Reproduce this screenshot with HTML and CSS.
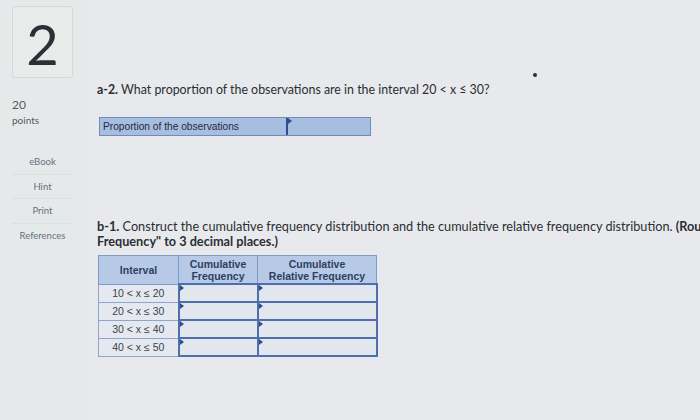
FILE: index.html
```html
<!DOCTYPE html>
<html>
<head>
<meta charset="utf-8">
<link rel="stylesheet" href="styles.css">
</head>
<body>
<div class="page">
  <aside class="side">
    <div class="qnum">2</div>
    <div class="pts"><div class="pts-n">20</div><div class="pts-l">points</div></div>
    <nav class="tools">
      <div class="tool">eBook</div>
      <div class="tool">Hint</div>
      <div class="tool">Print</div>
      <div class="tool">References</div>
    </nav>
  </aside>
  <main class="main">
    <p class="q"><b class="lbl">a-2.</b> What proportion of the observations are in the interval 20 &lt; x ≤ 30?</p>
    <div class="prop">
      <div class="prop-l">Proportion of the observations</div>
      <div class="prop-i"><span class="mark"></span></div>
    </div>
    <p class="q2"><b class="lbl">b-1.</b> Construct the cumulative frequency distribution and the cumulative relative frequency distribution. <b>(Round "Cumulative Relative</b><br><b>Frequency" to 3 decimal places.)</b></p>
    <table class="tbl">
      <thead>
        <tr><th class="c1">Interval</th><th class="c2">Cumulative<br>Frequency</th><th class="c3">Cumulative<br>Relative Frequency</th></tr>
      </thead>
      <tbody>
        <tr><td class="iv">10 &lt; x ≤ 20</td><td class="in"><span class="mark"></span></td><td class="in"><span class="mark"></span></td></tr>
        <tr><td class="iv">20 &lt; x ≤ 30</td><td class="in"><span class="mark"></span></td><td class="in"><span class="mark"></span></td></tr>
        <tr><td class="iv">30 &lt; x ≤ 40</td><td class="in"><span class="mark"></span></td><td class="in"><span class="mark"></span></td></tr>
        <tr><td class="iv">40 &lt; x ≤ 50</td><td class="in"><span class="mark"></span></td><td class="in"><span class="mark"></span></td></tr>
      </tbody>
    </table>
  </main>
  <span class="dot"></span>
</div>
</body>
</html>
```
FILE: styles.css
```css
html, body { margin: 0; padding: 0; }
body {
  width: 700px; height: 420px; overflow: hidden;
  background: #e7e9ec;
  font-family: "Open Sans", "Liberation Sans", sans-serif;
  color: #2b2e33;
}
.page { display: flex; position: relative; height: 420px; width: 700px; overflow: hidden; }
.side {
  width: 90px; flex: none;
  background: #e6e9e9;
  padding: 6px 0 0 12px;
  box-sizing: border-box;
}
.qnum {
  width: 61px; height: 72px; box-sizing: border-box;
  border: 1px solid #d6d9d9; border-radius: 3px;
  background: #e9ebeb;
  display: flex; align-items: center; justify-content: center;
  padding-top: 4px;
  font-family: "Lato", sans-serif; font-weight: 400;
  font-size: 56px; color: #2c2f33; line-height: 1;
}
.pts { margin-top: 20px; color: #555a5e; font-family: "Lato", sans-serif; }
.pts-n { font-size: 12px; line-height: 14px; }
.pts-l { font-size: 10px; line-height: 12px; margin-top: 2px; }
.tools { margin-top: 24px; width: 61px; }
.tool {
  font-family: "Lato", sans-serif; font-size: 9.5px; color: #66717d;
  text-align: center; height: 23.5px; line-height: 23.5px;
  border-bottom: 1px solid #dcdfdd;
}
.tool:last-child { border-bottom: none; }
.main { padding: 82px 0 0 7px; flex: 1; min-width: 0; }
.q {
  margin: 0; font-family: "Lato", sans-serif; font-size: 12.4px; line-height: 16px;
  color: #2b2e33; white-space: nowrap;
}
.lbl { font-weight: 700; }
.prop {
  margin: 19px 0 0 2px; display: flex; width: 272px; height: 19px;
  background: #a8bee1; border: 1px solid #6f8cbd; box-sizing: border-box;
}
.prop-l {
  width: 186px; font-family: "Liberation Sans", Arial, sans-serif;
  font-size: 10.2px; line-height: 17px; padding-left: 3px; color: #1f2a3a;
  box-sizing: border-box;
}
.prop-i { flex: 1; border-left: 2px solid #2d4f8e; position: relative; }
.mark {
  position: absolute; left: 0; top: 0; width: 0; height: 0;
  border-top: 3px solid transparent; border-bottom: 3px solid transparent;
  border-left: 4px solid #2d4f8e;
}
.q2 {
  margin: 83px 0 0 0;
  font-family: "Lato", sans-serif; font-size: 12.7px; line-height: 15px; color: #2b2e33;
  white-space: nowrap;
}
.tbl {
  margin: 6px 0 0 1px; border-collapse: collapse;
  font-family: "Liberation Sans", Arial, sans-serif; font-size: 10.5px;
}
.tbl th {
  background: #b6c9e6; color: #2e3f5e; font-weight: 700;
  border: 1px solid #7f9bc6; height: 27px; padding: 0; line-height: 12px;
}
.c1 { width: 79px; }
.c2 { width: 78px; }
.c3 { width: 118px; }
.tbl td { height: 16px; padding: 0; }
.iv {
  background: #e5e9ef; color: #3a4250; text-align: center;
  border: 1px solid #8ea6cb;
}
.in {
  position: relative; background: #e2e7ee;
  border: 2px solid #4d6fab;
}
.dot {
  position: absolute; left: 533px; top: 73px;
  width: 4px; height: 4px; border-radius: 50%; background: #2a2d33;
}
```
